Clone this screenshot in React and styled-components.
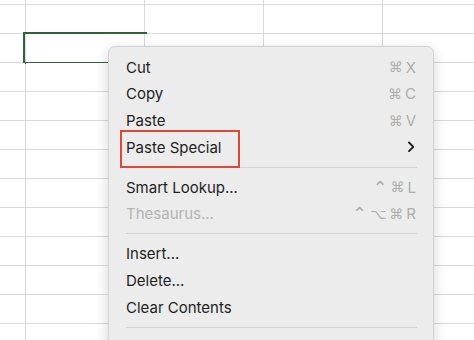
import React from "react";
import styled, { createGlobalStyle } from "styled-components";

const Global = createGlobalStyle`
  html, body { margin: 0; padding: 0; background: #ffffff; overflow: hidden; }
  body { font-family: Inter, "Liberation Sans", Arial, sans-serif; }
`;

const Page = styled.div`
  position: relative;
  width: 474px;
  height: 340px;
  overflow: hidden;
  background: #fff;
`;

const Sheet = styled.div`
  display: grid;
  grid-template-columns: 25px repeat(4, 118px) 60px;
  grid-template-rows: 4px repeat(12, 28px);
  gap: 1px;
  background: #d9d9d9;
  width: 600px;
`;

const Cell = styled.div`
  background: #fff;
  position: relative;
  ${(p) =>
    p.$selected &&
    `
    &::after {
      content: "";
      position: absolute;
      left: -3px; top: -2px; right: -3px; bottom: -2px;
      border: 2px solid #2b653a;
    }
  `}
`;

const Menu = styled.div`
  position: absolute;
  left: 108px;
  top: 46px;
  width: 326px;
  height: 320px;
  box-sizing: border-box;
  background: #ececec;
  border: 1px solid #d2d2d2;
  border-radius: 7px;
  box-shadow: 0 4px 14px rgba(0, 0, 0, 0.17);
  padding: 7px 0 0 0;
  display: flex;
  flex-direction: column;
`;

const Item = styled.div`
  position: relative;
  height: 26.67px;
  flex: none;
  display: flex;
  align-items: center;
  justify-content: space-between;
  padding: 0 17px 0 17px;
  font-size: 15px;
  color: ${(p) => (p.$disabled ? "#b3b3b3" : "#1e1e1e")};
  ${(p) =>
    p.$highlighted &&
    `
    &::after {
      content: "";
      position: absolute;
      left: 11px; top: -4px;
      width: 120px; height: 38px;
      box-sizing: border-box;
      border: 2px solid #dc4a37;
    }
  `}
`;

const Shortcut = styled.span`
  font-family: Inter, "DejaVu Sans", sans-serif;
  font-size: 15px;
  color: #adadad;
  display: flex;
  align-items: center;
  gap: 3px;
`;

const Sym = styled.span`
  font-family: "DejaVu Sans", sans-serif;
  font-size: ${(p) => p.$size || 14}px;
`;

const Separator = styled.div`
  flex: none;
  height: 1px;
  background: #d3d3d3;
  margin: 6px 16px 6.33px 17px;
`;

const Chevron = () => (
  <svg width="8" height="12" viewBox="0 0 8 12" style={{ marginRight: 1 }}>
    <path d="M2 1.5 L6.3 5.8 L2 10.1" fill="none" stroke="#1e1e1e" strokeWidth="1.9" strokeLinecap="round" strokeLinejoin="round" />
  </svg>
);

const Cmd = () => <Sym>⌘</Sym>;
const Ctrl = () => <Sym $size={18}>⌃</Sym>;
const Opt = () => <Sym>⌥</Sym>;

export default function App() {
  const cells = [];
  for (let r = 0; r < 13; r++) {
    for (let c = 0; c < 6; c++) {
      cells.push(<Cell key={`${r}-${c}`} $selected={r === 2 && c === 1} />);
    }
  }
  return (
    <Page>
      <Global />
      <Sheet>{cells}</Sheet>
      <Menu>
        <Item>Cut<Shortcut><Cmd />X</Shortcut></Item>
        <Item>Copy<Shortcut><Cmd />C</Shortcut></Item>
        <Item>Paste<Shortcut><Cmd />V</Shortcut></Item>
        <Item $highlighted>Paste Special<Chevron /></Item>
        <Separator />
        <Item>Smart Lookup...<Shortcut><Ctrl /><Cmd />L</Shortcut></Item>
        <Item $disabled>Thesaurus...<Shortcut><Ctrl /><Opt /><Cmd />R</Shortcut></Item>
        <Separator />
        <Item>Insert...</Item>
        <Item>Delete...</Item>
        <Item>Clear Contents</Item>
        <Separator />
      </Menu>
    </Page>
  );
}
